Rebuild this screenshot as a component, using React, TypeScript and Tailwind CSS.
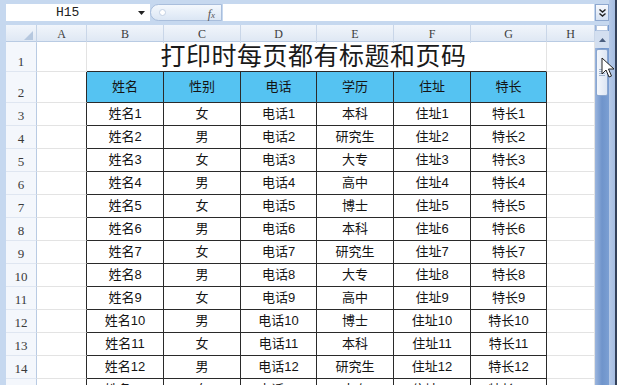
import React from 'react'

const COLS = 'grid grid-cols-[31px_50px_77px_77px_76px_77px_77px_76px_48px]'
const CJK = "font-['Liberation_Sans','Noto_Sans_CJK_SC',sans-serif]"
const SERIF = "font-['Liberation_Serif','DejaVu_Serif',serif]"

const headers = ['姓名', '性别', '电话', '学历', '住址', '特长']
const edu = ['本科', '研究生', '大专', '高中', '博士']

const rows = Array.from({ length: 13 }, (_, i) => {
  const n = i + 1
  return [`姓名${n}`, n % 2 ? '女' : '男', `电话${n}`, edu[i % 5], `住址${n}`, `特长${n}`]
})

function RowHead({ label }: { label: string }) {
  return (
    <div
      className={`flex items-end justify-center pb-[1px] bg-[#f4f7fc] border-r border-b border-r-[#b9cbe3] border-b-[#dfe6f1] text-[13px] leading-[16px] text-[#3a3a3a] ${SERIF}`}
    >
      {label}
    </div>
  )
}

function DataRow({ num, cells, header, h }: { num: number; cells: string[]; header?: boolean; h: string }) {
  return (
    <div className={`${COLS} ${h}`}>
      <RowHead label={String(num)} />
      <div className="border-r border-b border-r-[#2a2a2a] border-b-[#e3e3e3]" />
      {cells.map((c, i) => (
        <div
          key={i}
          className={`flex items-center justify-center border-r border-b border-[#2a2a2a] text-[13px] text-[#141414] ${CJK} ${
            header ? 'bg-[#55c3f2]' : 'bg-white'
          }`}
        >
          {c}
        </div>
      ))}
      <div className="border-r border-b border-[#e3e3e3]" />
    </div>
  )
}

function Cursor() {
  return (
    <svg className="absolute left-[601px] top-[57px]" width="14" height="22" viewBox="0 0 14 22">
      <path d="M1 1 L1 17 L5 13 L8 20 L10.5 19 L7.5 12 L13 12 Z" fill="#fff" stroke="#222" strokeWidth="1" strokeLinejoin="round" />
    </svg>
  )
}

export default function App() {
  return (
    <div className="relative flex w-[617px] h-[385px] overflow-hidden bg-[#c6d8ef]">
      <div className="flex flex-col w-[609px]">
        {/* formula bar */}
        <div className="h-[4px]" />
        <div className="flex h-[17px] pl-[6px]">
          <div className="relative flex items-center w-[144px] bg-white">
            <span className={`ml-[50px] text-[13px] text-[#222] font-['Liberation_Mono','DejaVu_Sans_Mono',monospace]`}>H15</span>
            <svg className="absolute left-[132px] top-[7px]" width="7" height="4" viewBox="0 0 7 4">
              <path d="M0 0 H7 L3.5 4 Z" fill="#222" />
            </svg>
          </div>
          <div className="relative flex items-center w-[72px] rounded-l-full border border-[#a9bedc] bg-gradient-to-b from-[#f4f8fd] to-[#dbe6f4]">
            <span className="ml-[8px] w-[7px] h-[7px] rounded-full border border-[#c3d1e4] bg-white" />
            <span className={`absolute right-[6px] top-[0px] italic text-[12px] text-[#555] ${SERIF}`}>
              f<span className="text-[9px]">x</span>
            </span>
          </div>
          <div className="flex-1 ml-[1px] bg-white" />
          <div className="flex items-center justify-center w-[14px] ml-[1px] border border-[#8ea8cf] bg-gradient-to-b from-[#f7f9fd] to-[#d5e1f2]">
            <svg width="7" height="8" viewBox="0 0 7 8">
              <path d="M0.5 0.5 L3.5 3 L6.5 0.5 M0.5 4.5 L3.5 7 L6.5 4.5" fill="none" stroke="#222" strokeWidth="1.4" />
            </svg>
          </div>
        </div>
        <div className="h-[4px]" />

        <div className="flex flex-1 min-h-0">
          <div className="w-[6px]" />
          <div className="w-[589px] bg-white overflow-hidden">
            {/* column headers */}
            <div className={`${COLS} h-[17px] bg-gradient-to-b from-[#f1f5fb] to-[#dfe8f4] border-b border-[#b9cbe3]`}>
              <div className="relative border-r border-[#c4d3e6]">
                <svg className="absolute right-[3px] bottom-[3px]" width="9" height="9" viewBox="0 0 9 9">
                  <path d="M9 0 V9 H0 Z" fill="#b6c8df" />
                </svg>
              </div>
              {['A', 'B', 'C', 'D', 'E', 'F', 'G', 'H'].map((c) => (
                <div key={c} className={`flex items-center justify-center border-r border-[#c9d6e8] text-[12px] text-[#3c3c3c] ${SERIF}`}>
                  {c}
                </div>
              ))}
            </div>

            {/* row 1: title */}
            <div className={`${COLS} h-[30px]`}>
              <RowHead label="1" />
              <div className="border-r border-b border-[#e3e3e3]" />
              <div className={`col-span-6 flex items-center justify-center pr-[6px] border-b border-b-[#2a2a2a] border-r border-r-[#e3e3e3] text-[25px] tracking-[0.5px] leading-none text-[#1a1a1a] ${CJK}`}>
                打印时每页都有标题和页码
              </div>
              <div className="border-r border-b border-[#e3e3e3]" />
            </div>

            <DataRow num={2} cells={headers} header h="h-[31px]" />
            {rows.map((r, i) => (
              <DataRow key={i} num={i + 3} cells={r} h="h-[23px]" />
            ))}
          </div>

          {/* vertical scrollbar */}
          <div className="flex flex-col w-[14px] bg-gradient-to-r from-[#9cb6de] via-[#6f94cb] to-[#7b9fd3]">
            <div className="h-[6px] mx-[1px] bg-white border border-[#b4c6e0]" />
            <div className="flex items-center justify-center h-[17px] bg-[#d3dff0]">
              <svg width="7" height="4" viewBox="0 0 7 4">
                <path d="M0 4 H7 L3.5 0 Z" fill="#4b5f7f" />
              </svg>
            </div>
            <div className="h-[47px] mx-[1px] mt-[1px] rounded-[2px] border border-[#8aa6cf] bg-gradient-to-r from-[#f4f7fc] to-[#dde6f3] flex items-center justify-center">
              <div className="w-[6px] h-[7px] bg-[repeating-linear-gradient(to_bottom,#9fb3cf_0_1px,transparent_1px_2px)]" />
            </div>
            <div className="flex-1" />
          </div>
        </div>
      </div>
      <div className="w-[8px] bg-gradient-to-r from-[#b6cae8] to-[#a5bde2] border-r-2 border-[#33415a]" />
      <Cursor />
    </div>
  )
}
